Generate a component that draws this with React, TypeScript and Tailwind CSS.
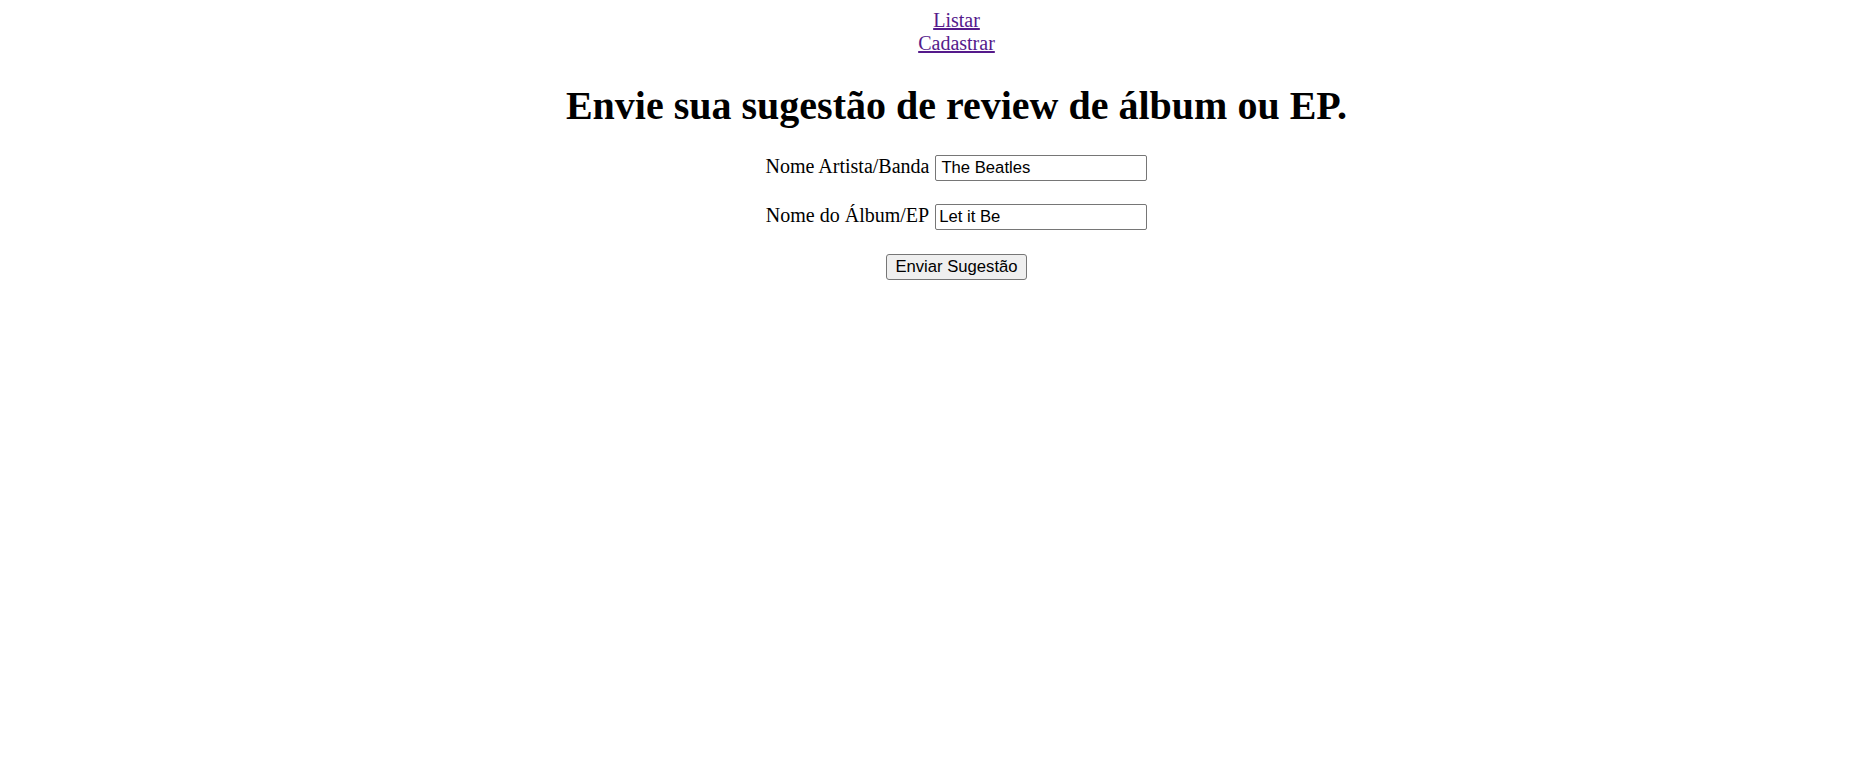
import { useState } from "react";

const serif = "font-['Liberation_Serif','Times_New_Roman',serif]";
const sans = "font-['Liberation_Sans',Arial,sans-serif]";

export default function App() {
  const [artist, setArtist] = useState("The Beatles");
  const [album, setAlbum] = useState("Let it Be");

  return (
    <div className={`min-h-[764px] bg-white pl-[61px] pt-[9px] text-center text-[20px] leading-[23px] text-black ${serif}`}>
      <nav className="flex flex-col items-center">
        <a href="#listar" className="text-[#551a8b] underline">
          Listar
        </a>
        <a href="#cadastrar" className="text-[#551a8b] underline">
          Cadastrar
        </a>
      </nav>

      <h1 className="mt-[28px] text-[40px] font-bold leading-[46px]">
        Envie sua sugestão de review de álbum ou EP.
      </h1>

      <form className="mt-[26px] flex flex-col items-center" onSubmit={(e) => e.preventDefault()}>
        <label className="flex items-baseline justify-center gap-[6px]">
          <span>Nome Artista/Banda</span>
          <input
            className={`h-[26px] w-[212px] rounded-[2px] border border-[#767676] bg-white px-[5px] text-[16.67px] text-black outline-none ${sans}`}
            value={artist}
            onChange={(e) => setArtist(e.target.value)}
          />
        </label>
        <label className="mt-[23px] flex items-baseline justify-center gap-[6px]">
          <span>Nome do Álbum/EP</span>
          <input
            className={`h-[26px] w-[212px] rounded-[2px] border border-[#767676] bg-white px-[3px] text-[16.67px] text-black outline-none ${sans}`}
            value={album}
            onChange={(e) => setAlbum(e.target.value)}
          />
        </label>
        <button
          type="submit"
          className={`mt-[24px] h-[26px] rounded-[3px] border border-[#767676] bg-[#efefef] px-[8px] text-[16.67px] leading-[20px] text-black ${sans}`}
        >
          Enviar Sugestão
        </button>
      </form>
    </div>
  );
}
